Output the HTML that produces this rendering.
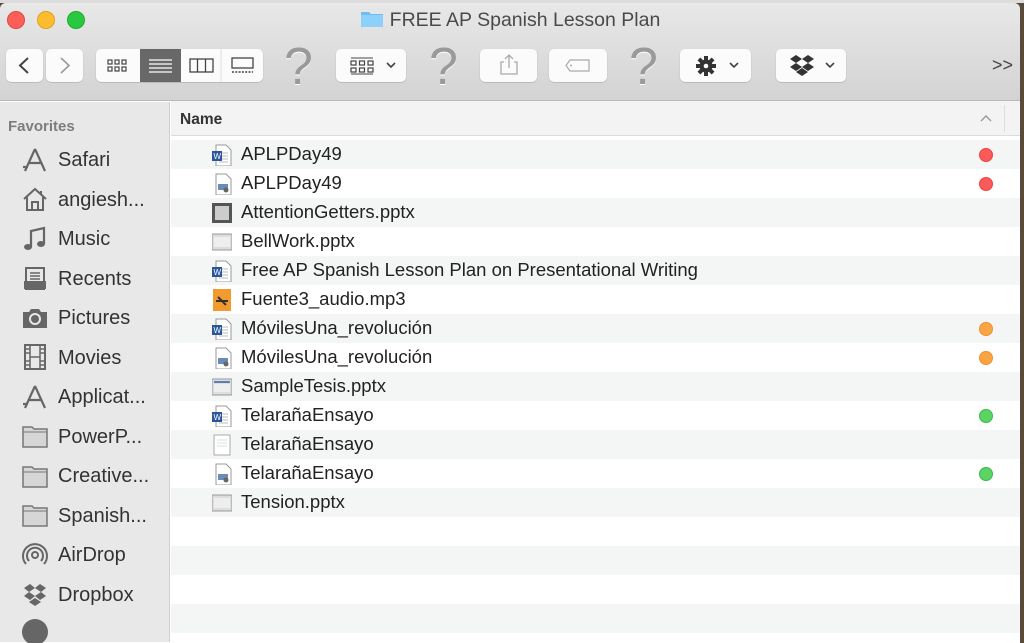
<!DOCTYPE html>
<html><head><meta charset="utf-8"><style>
*{margin:0;padding:0;box-sizing:border-box}
body{width:1024px;height:624px;overflow:hidden;background:#5a4a3a;font-family:"Liberation Sans",sans-serif;position:relative}
.win{position:absolute;left:0;top:3px;width:1020px;height:640px;background:#fff;border-radius:6px 6px 0 0;overflow:hidden}
.top{position:absolute;left:0;top:0;width:1020px;height:98px;background:linear-gradient(#e8e8e8,#d3d3d3);border-bottom:1px solid #b8b8b8}
.dot{position:absolute;top:8px;width:18px;height:18px;border-radius:50%}
.title{position:absolute;top:6px;left:0;width:1020px;text-align:center;font-size:19.5px;color:#4a4a4a}
.btn{position:absolute;top:46px;height:33px;background:#fbfbfb;border-radius:5px;box-shadow:0 0.5px 1px rgba(0,0,0,.25)}
.q{position:absolute;top:34px;font-size:52px;color:#9a9a9a;font-family:"Liberation Sans",sans-serif;text-shadow:0 1px 0 #fff}
.side{position:absolute;left:0;top:99px;width:170px;height:540px;background:#e8e8e8;border-right:1px solid #d0d0d0}
.fav{position:absolute;left:8px;top:16px;font-size:15px;color:#7d7d7d;font-weight:bold}
.si{position:absolute;left:58px;font-size:20px;color:#333}
.ic{position:absolute;left:21px;width:28px;height:26px}
.hdr{position:absolute;left:171px;top:98px;width:849px;height:35px;background:#f3f3f3;border-bottom:1px solid #dcdcdc}
.row{position:absolute;left:171px;width:849px;height:29px}
.row.g{background:#f4f5f5}
.fn{position:absolute;left:70px;top:3px;font-size:18.5px;color:#222}
.fi{position:absolute;left:41px;top:4px;width:20px;height:22px}
.tag{position:absolute;left:808px;top:8px;width:14px;height:14px;border-radius:50%}
</style></head><body>
<div class="win">
<div class="top">
<div class="dot" style="left:7px;background:#fc5f57;border:1px solid #de4a41"></div>
<div class="dot" style="left:37px;background:#fdbc2e;border:1px solid #dea123"></div>
<div class="dot" style="left:67px;background:#29c840;border:1px solid #1eac2c"></div>
<div class="title"><svg width="24" height="18" style="vertical-align:-2px;margin-right:6px" viewBox="0 0 24 18"><path d="M1 2h8l2 2h12v13H1z" fill="#6cbdf5"/><path d="M1 5h22v12H1z" fill="#8dd0fb"/></svg>FREE AP Spanish Lesson Plan</div>
<div class="btn" style="left:6px;width:37px"><svg width="37" height="33"><path d="M22 9l-8 7.5 8 7.5" stroke="#444" stroke-width="2" fill="none"/></svg></div>
<div class="btn" style="left:46px;width:37px"><svg width="37" height="33"><path d="M15 9l8 7.5-8 7.5" stroke="#999" stroke-width="1.6" fill="none"/></svg></div>
<div class="btn" style="left:96px;width:167px;overflow:hidden">
<svg width="167" height="33">
<g fill="none" stroke="#444" stroke-width="1.2"><rect x="12" y="11" width="4" height="4"/><rect x="19" y="11" width="4" height="4"/><rect x="26" y="11" width="4" height="4"/><rect x="12" y="18" width="4" height="4"/><rect x="19" y="18" width="4" height="4"/><rect x="26" y="18" width="4" height="4"/></g>
<rect x="44" y="0" width="41" height="33" fill="#686868"/>
<g stroke="#fff" stroke-width="1.3"><path d="M53 11h23M53 15h23M53 19h23M53 23h23"/></g>
<path d="M125 0v33" stroke="#ddd"/>
<g fill="none" stroke="#444" stroke-width="1.3"><rect x="94" y="10" width="23" height="13"/><path d="M101.5 10v13M109.5 10v13"/><rect x="136" y="9" width="21" height="10"/></g>
<path d="M136 23h21" stroke="#444" stroke-width="1.5" stroke-dasharray="2 1.3"/>
</svg></div>
<div class="q" style="left:284px">?</div>
<div class="btn" style="left:336px;width:70px"><svg width="70" height="33"><path d="M15 9h22M15 25h22" stroke="#444"/><g fill="none" stroke="#444" stroke-width="1.2"><rect x="15" y="12" width="5" height="4"/><rect x="23.5" y="12" width="5" height="4"/><rect x="32" y="12" width="5" height="4"/><rect x="15" y="19" width="5" height="4"/><rect x="23.5" y="19" width="5" height="4"/><rect x="32" y="19" width="5" height="4"/></g><path d="M51 14l4 4 4-4" stroke="#444" stroke-width="1.6" fill="none"/></svg></div>
<div class="q" style="left:429px">?</div>
<div class="btn" style="left:480px;width:57px"><svg width="57" height="33"><path d="M24 13h-3v12h16V13h-3M29 6v13M25 10l4-4 4 4" stroke="#aaa" stroke-width="1.3" fill="none"/></svg></div>
<div class="btn" style="left:549px;width:58px"><svg width="58" height="33"><path d="M21 11h19v11H21l-4-5.5z" stroke="#aaa" stroke-width="1.2" fill="none"/><circle cx="22" cy="16.5" r="1" fill="#aaa"/></svg></div>
<div class="q" style="left:629px">?</div>
<div class="btn" style="left:680px;width:71px"><svg width="71" height="33"><g transform="translate(26 17)" fill="#333"><circle r="6.5"/><g id="t"><rect x="-2" y="-10" width="4" height="20"/></g><use href="#t" transform="rotate(45)"/><use href="#t" transform="rotate(90)"/><use href="#t" transform="rotate(135)"/><circle r="2.3" fill="#fbfbfb"/></g><path d="M50 14l4 4 4-4" stroke="#444" stroke-width="1.6" fill="none"/></svg></div>
<div class="btn" style="left:776px;width:70px"><svg width="70" height="33"><g fill="#333"><path d="M14 10l6-4 6 4-6 4zM26 10l6-4 6 4-6 4zM14 18l6-4 6 4-6 4zM26 18l6-4 6 4-6 4zM20 23l6-4 6 4-6 4z"/></g><path d="M50 14l4 4 4-4" stroke="#444" stroke-width="1.6" fill="none"/></svg></div>
<div style="position:absolute;left:992px;top:52px;font-size:18px;color:#444">&gt;&gt;</div>
</div>
<div class="side">
<div class="fav">Favorites</div>
<svg class="ic" style="top:45px" viewBox="0 0 28 26"><path d="M14 2L4 24M14 2l10 22M7 16h14M2 20h5" stroke="#666" stroke-width="2.2" fill="none"/></svg><div class="si" style="top:47px">Safari</div>
<svg class="ic" style="top:84px" viewBox="0 0 28 26"><path d="M3 13L14 3l11 10M6 11v13h16V11M11 24v-8h6v8M20 5v4" stroke="#666" stroke-width="2" fill="none"/></svg><div class="si" style="top:87px">angiesh...</div>
<svg class="ic" style="top:124px" viewBox="0 0 28 26"><path d="M10 21V5l13-3v16" stroke="#666" stroke-width="2.2" fill="none"/><ellipse cx="7" cy="21" rx="4" ry="3" fill="#666"/><ellipse cx="20" cy="18" rx="4" ry="3" fill="#666"/></svg><div class="si" style="top:126px">Music</div>
<svg class="ic" style="top:163px" viewBox="0 0 28 26"><path d="M5 3h18v21H5z" fill="none" stroke="#666" stroke-width="2"/><path d="M9 8h10M9 11h10M9 14h10" stroke="#666" stroke-width="1.5"/><path d="M3 16h22v8H3z" fill="#666"/></svg><div class="si" style="top:166px">Recents</div>
<svg class="ic" style="top:203px" viewBox="0 0 28 26"><path d="M2 7h6l2-3h8l2 3h6v16H2z" fill="#666"/><circle cx="14" cy="14" r="6" fill="#e8e8e8"/><circle cx="14" cy="14" r="4" fill="#666"/></svg><div class="si" style="top:205px">Pictures</div>
<svg class="ic" style="top:242px" viewBox="0 0 28 26"><rect x="4" y="1" width="20" height="24" fill="none" stroke="#666" stroke-width="2"/><path d="M9 1v24M19 1v24M9 13h10M4 5h5M4 9h5M4 17h5M4 21h5M19 5h5M19 9h5M19 17h5M19 21h5" stroke="#666" stroke-width="1.5"/></svg><div class="si" style="top:245px">Movies</div>
<svg class="ic" style="top:282px" viewBox="0 0 28 26"><path d="M14 2L4 24M14 2l10 22M7 16h14M2 20h5" stroke="#666" stroke-width="2.2" fill="none"/></svg><div class="si" style="top:284px">Applicat...</div>
<svg class="ic" style="top:321px" viewBox="0 0 28 26"><path d="M2 4h9l2 2h13v18H2z" fill="#d6d6d6" stroke="#777" stroke-width="1.5"/><path d="M2 9h24" stroke="#777"/></svg><div class="si" style="top:324px">PowerP...</div>
<svg class="ic" style="top:361px" viewBox="0 0 28 26"><path d="M2 4h9l2 2h13v18H2z" fill="#d6d6d6" stroke="#777" stroke-width="1.5"/><path d="M2 9h24" stroke="#777"/></svg><div class="si" style="top:363px">Creative...</div>
<svg class="ic" style="top:400px" viewBox="0 0 28 26"><path d="M2 4h9l2 2h13v18H2z" fill="#d6d6d6" stroke="#777" stroke-width="1.5"/><path d="M2 9h24" stroke="#777"/></svg><div class="si" style="top:403px">Spanish...</div>
<svg class="ic" style="top:440px" viewBox="0 0 28 26"><g fill="none" stroke="#666" stroke-width="2"><circle cx="14" cy="13" r="3"/><path d="M8 19a8 8 0 1 1 12 0M5 22a12 12 0 1 1 18 0"/></g></svg><div class="si" style="top:442px">AirDrop</div>
<svg class="ic" style="top:479px" viewBox="0 0 28 26"><g fill="#666"><path d="M3 7l6-4 5 4-6 4zM14 7l5-4 6 4-5 4zM3 15l5-4 6 4-5 4zM14 15l6-4 5 4-6 4zM8 21l6-4 6 4-6 4z"/></g></svg><div class="si" style="top:482px">Dropbox</div>
<div style="position:absolute;left:22px;top:517px;width:26px;height:26px;border-radius:50%;background:#666"></div>
</div>
<div class="hdr"><div style="position:absolute;left:9px;top:10px;font-size:15.5px;color:#333;font-weight:bold">Name</div>
<svg style="position:absolute;left:808px;top:13px" width="14" height="10"><path d="M2 7l5-5 5 5" stroke="#999" stroke-width="1.4" fill="none"/></svg>
<div style="position:absolute;left:833px;top:4px;width:1px;height:27px;background:#ddd"></div></div>
</div>
<div style="position:absolute;left:0;top:0;width:1024px;height:3px;background:#ddd"></div>
<div style="position:absolute;left:0;top:6px">
<div class="row g" style="top:134px"><svg class="fi" viewBox="0 0 20 22"><path d="M4 1h10l5 5v16H4z" fill="#fff" stroke="#999"/><path d="M7 9h9M7 12h9M7 15h9M7 18h9" stroke="#bbb"/><rect x="0" y="7" width="10" height="10" fill="#2b579a"/><text x="1.5" y="15" font-size="8" fill="#fff" font-family="Liberation Sans">W</text></svg><div class="fn">APLPDay49</div><div class="tag" style="background:#fb5a5a;border:1px solid #e44"></div></div>
<div class="row" style="top:163px"><svg class="fi" viewBox="0 0 20 22"><path d="M4 1h10l5 5v16H4z" fill="#fff" stroke="#999"/><rect x="6" y="11" width="10" height="6" fill="#6b8bb8"/><circle cx="14" cy="17" r="2.5" fill="#666"/></svg><div class="fn">APLPDay49</div><div class="tag" style="background:#fb5a5a;border:1px solid #e44"></div></div>
<div class="row g" style="top:192px"><svg class="fi" viewBox="0 0 20 22"><rect x="0" y="1" width="20" height="20" fill="#555"/><rect x="3" y="4" width="14" height="14" fill="#ccc"/></svg><div class="fn">AttentionGetters.pptx</div></div>
<div class="row" style="top:221px"><svg class="fi" viewBox="0 0 20 22"><rect x="0" y="3" width="20" height="16" rx="1" fill="#ddd" stroke="#999"/><rect x="2" y="6" width="16" height="10" fill="#eee"/></svg><div class="fn">BellWork.pptx</div></div>
<div class="row g" style="top:250px"><svg class="fi" viewBox="0 0 20 22"><path d="M4 1h10l5 5v16H4z" fill="#fff" stroke="#999"/><path d="M7 9h9M7 12h9M7 15h9M7 18h9" stroke="#bbb"/><rect x="0" y="7" width="10" height="10" fill="#2b579a"/><text x="1.5" y="15" font-size="8" fill="#fff" font-family="Liberation Sans">W</text></svg><div class="fn">Free AP Spanish Lesson Plan on Presentational Writing</div></div>
<div class="row" style="top:279px"><svg class="fi" viewBox="0 0 20 22"><rect x="1" y="0" width="18" height="22" fill="#f29a2e"/><path d="M4 12h12M6 8l8 8" stroke="#333" stroke-width="2"/></svg><div class="fn">Fuente3_audio.mp3</div></div>
<div class="row g" style="top:308px"><svg class="fi" viewBox="0 0 20 22"><path d="M4 1h10l5 5v16H4z" fill="#fff" stroke="#999"/><path d="M7 9h9M7 12h9M7 15h9M7 18h9" stroke="#bbb"/><rect x="0" y="7" width="10" height="10" fill="#2b579a"/><text x="1.5" y="15" font-size="8" fill="#fff" font-family="Liberation Sans">W</text></svg><div class="fn">MóvilesUna_revolución</div><div class="tag" style="background:#fba443;border:1px solid #e8922e"></div></div>
<div class="row" style="top:337px"><svg class="fi" viewBox="0 0 20 22"><path d="M4 1h10l5 5v16H4z" fill="#fff" stroke="#999"/><rect x="6" y="11" width="10" height="6" fill="#6b8bb8"/><circle cx="14" cy="17" r="2.5" fill="#666"/></svg><div class="fn">MóvilesUna_revolución</div><div class="tag" style="background:#fba443;border:1px solid #e8922e"></div></div>
<div class="row g" style="top:366px"><svg class="fi" viewBox="0 0 20 22"><rect x="0" y="3" width="20" height="16" rx="1" fill="#ddd" stroke="#999"/><rect x="2" y="5" width="16" height="2" fill="#5b7fb5"/><rect x="2" y="8" width="16" height="8" fill="#eee"/></svg><div class="fn">SampleTesis.pptx</div></div>
<div class="row" style="top:395px"><svg class="fi" viewBox="0 0 20 22"><path d="M4 1h10l5 5v16H4z" fill="#fff" stroke="#999"/><path d="M7 9h9M7 12h9M7 15h9M7 18h9" stroke="#bbb"/><rect x="0" y="7" width="10" height="10" fill="#2b579a"/><text x="1.5" y="15" font-size="8" fill="#fff" font-family="Liberation Sans">W</text></svg><div class="fn">TelarañaEnsayo</div><div class="tag" style="background:#5bd365;border:1px solid #3cba48"></div></div>
<div class="row g" style="top:424px"><svg class="fi" viewBox="0 0 20 22"><rect x="2" y="1" width="16" height="20" fill="#fff" stroke="#aaa"/><path d="M5 6h10M5 9h10M5 12h10" stroke="#ddd"/></svg><div class="fn">TelarañaEnsayo</div></div>
<div class="row" style="top:453px"><svg class="fi" viewBox="0 0 20 22"><path d="M4 1h10l5 5v16H4z" fill="#fff" stroke="#999"/><rect x="6" y="11" width="10" height="6" fill="#6b8bb8"/><circle cx="14" cy="17" r="2.5" fill="#666"/></svg><div class="fn">TelarañaEnsayo</div><div class="tag" style="background:#5bd365;border:1px solid #3cba48"></div></div>
<div class="row g" style="top:482px"><svg class="fi" viewBox="0 0 20 22"><rect x="0" y="3" width="20" height="16" rx="1" fill="#ddd" stroke="#999"/><rect x="2" y="6" width="16" height="10" fill="#eee"/></svg><div class="fn">Tension.pptx</div></div>
<div class="row" style="top:511px"></div>
<div class="row g" style="top:540px"></div>
<div class="row" style="top:569px"></div>
<div class="row g" style="top:598px"></div>
</div>
</body></html>
